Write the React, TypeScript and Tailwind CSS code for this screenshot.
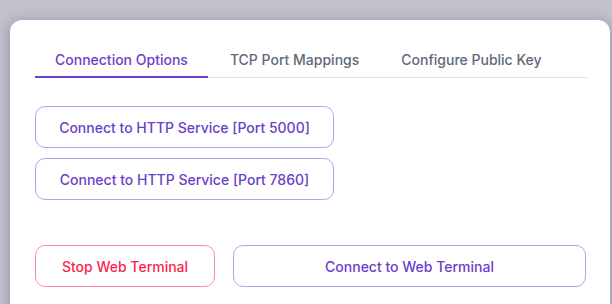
import React, { useState } from 'react'

const tabs = ['Connection Options', 'TCP Port Mappings', 'Configure Public Key']

export default function App() {
  const [active, setActive] = useState(0)

  return (
    <div
      className="h-[304px] w-[612px] overflow-hidden bg-[#c1c2cd] pl-[10px] pr-[2px] pt-[20px]"
      style={{ fontFamily: 'Inter, "Noto Sans", sans-serif' }}
    >
      <div className="h-[320px] rounded-[12px] bg-white pl-[25px] pr-[23px] pt-[30px] shadow-[0_2px_14px_rgba(40,40,60,0.35)]">
        <div className="flex gap-[2px] border-b border-[#e1e1e7]">
          {tabs.map((t, i) => (
            <button
              key={t}
              onClick={() => setActive(i)}
              className={
                'relative px-[20px] pb-[7px] text-[14px] leading-5 font-medium ' +
                (i === active ? 'text-[#6a3fc9]' : 'text-[#626878]')
              }
            >
              {t}
              {i === active ? (
                <span className="absolute bottom-[-1px] left-0 right-0 h-[2px] bg-[#6a3fc9]" />
              ) : null}
            </button>
          ))}
        </div>

        <div className="mt-[28px] flex flex-col gap-[10px]">
          <button className={purpleBtn + ' w-[299px]'}>
            Connect to HTTP Service [Port 5000]
          </button>
          <button className={purpleBtn + ' w-[299px]'}>
            Connect to HTTP Service [Port 7860]
          </button>
        </div>

        <div className="mt-[45px] flex gap-[18px]">
          <button className="h-[42px] w-[180px] rounded-[10px] border border-[#ff8ca1] text-[14px] font-medium text-[#fe1f4c]">
            Stop Web Terminal
          </button>
          <button className={purpleBtn + ' w-[353px]'}>
            Connect to Web Terminal
          </button>
        </div>
      </div>
    </div>
  )
}

const purpleBtn =
  'h-[42px] rounded-[10px] border border-[#b8a3e7] text-[14px] font-medium text-[#6a3fc9]'
